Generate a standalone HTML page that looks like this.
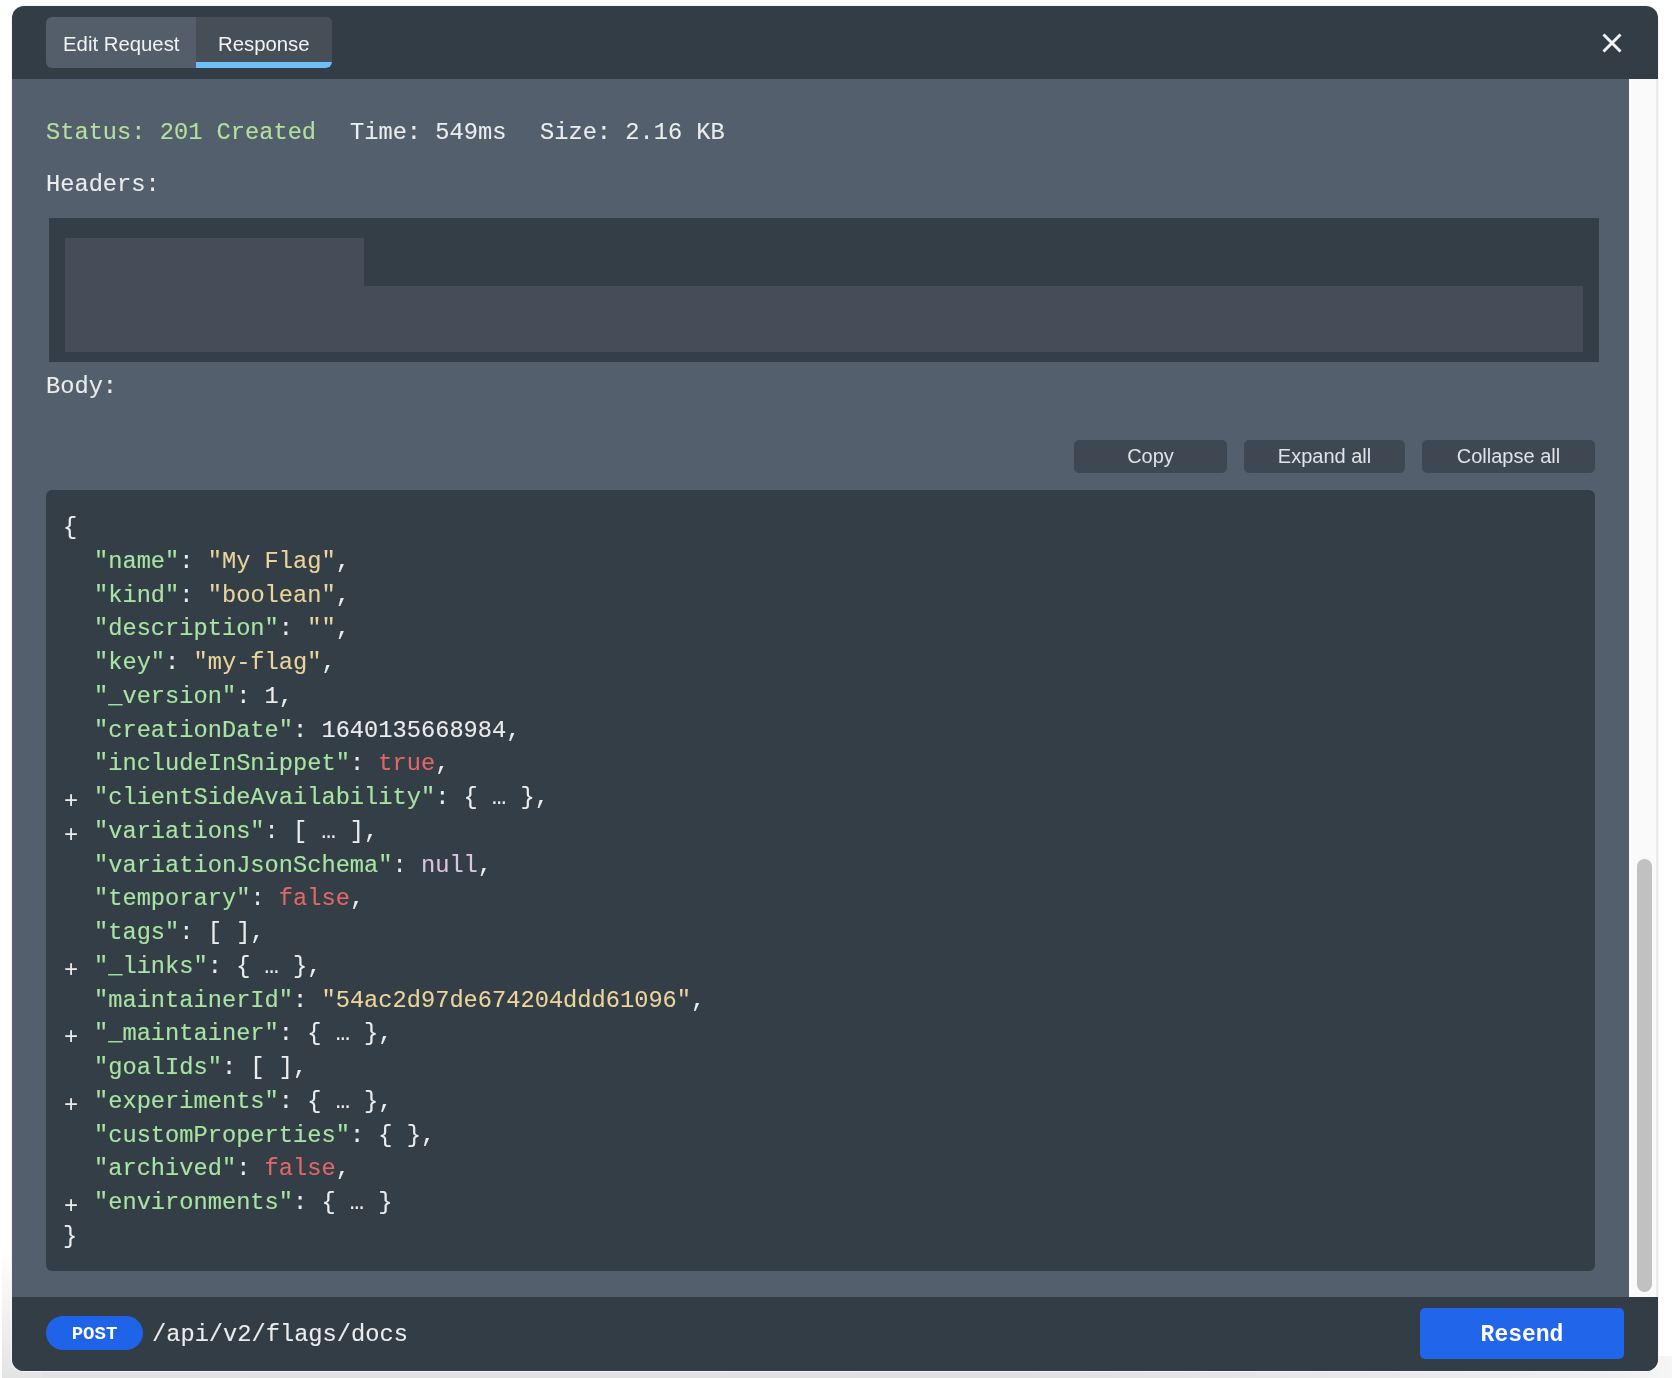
<!DOCTYPE html>
<html><head><meta charset="utf-8">
<style>
*{margin:0;padding:0;box-sizing:border-box}
html,body{width:1672px;height:1378px;overflow:hidden;background:#fff}
body{position:relative;font-family:"Liberation Sans",sans-serif}
.m,.tabt,.btn,#post,#resend{will-change:transform}
.a{position:absolute}
#dlg{left:12px;top:6px;width:1646px;height:1365px;border-radius:12px;background:#333d46;box-shadow:0 0 0 1px #f6f6f6}
#tabs{left:46px;top:17px;width:286px;height:51px;border-radius:6px;overflow:hidden;background:#545e6a}
#tab2{left:150px;top:0;width:136px;height:51px;background:#464f58}
#uline{left:150px;top:45px;width:136px;height:6px;background:#6ebff7;border-bottom-right-radius:6px}
.tabt{top:0;font-size:20.35px;color:#f2f2f2;line-height:54px;white-space:nowrap}
#body{left:12px;top:79px;width:1617px;height:1218px;background:#545f6d}
#track{left:1629px;top:79px;width:29px;height:1218px;background:#fafafa;border-right:2px solid #ececec}
#thumb{left:1637px;top:859px;width:15px;height:433px;border-radius:8px;background:#c1c1c1}
#foot{left:12px;top:1297px;width:1646px;height:74px;background:#333d46;border-radius:0 0 12px 12px}
.m{position:absolute;white-space:pre;-webkit-text-stroke:0.1px currentColor;font-family:"Liberation Mono",monospace;font-size:23.7px;line-height:30px;color:#ececec}
#hbox{left:49px;top:218px;width:1550px;height:144px;background:#343e47}
#hin1{left:65px;top:238px;width:299px;height:48px;background:#454e58}
#hin2{left:65px;top:286px;width:1518px;height:66px;background:#454e58}
.btn{top:440px;height:33px;border-radius:5px;background:#3f4852;color:#dfe2e6;font-size:20px;line-height:33px;text-align:center}
#code{left:46px;top:490px;width:1549px;height:781px;border-radius:6px;background:#343e47}
.code{line-height:33.75px}
.k{color:#a8e4a2}.s{color:#ecd59c}.r{color:#e26868}.n{color:#dcc3e4}
#post{left:46px;top:1316px;width:97px;height:34px;border-radius:17px;background:#1f63e8;color:#fff;font-family:"Liberation Mono",monospace;font-weight:bold;font-size:19px;line-height:36.6px;text-align:center}
#resend{left:1420px;top:1308px;width:204px;height:51px;border-radius:5px;background:#2165ea;color:#fff;font-family:"Liberation Mono",monospace;font-weight:bold;font-size:23px;line-height:54.5px;text-align:center}
</style></head><body>
<div class="a" style="left:2px;top:1250px;width:40px;height:128px;background:linear-gradient(to bottom,rgba(228,228,228,0),#e4e4e4)"></div>
<div class="a" style="left:42px;top:1356px;width:1630px;height:22px;background:linear-gradient(to right,#e2e2e2,#e0e0e0 60%,#efefef 97%,#f6f6f6)"></div>
<div class="a" id="dlg"></div>
<div class="a" id="tabs">
  <div class="a" id="tab2"></div>
  <div class="a" id="uline"></div>
  <div class="a tabt" style="left:16.8px">Edit Request</div>
  <div class="a tabt" style="left:172.4px">Response</div>
</div>
<svg class="a" style="left:1602px;top:32.7px" width="20" height="20" viewBox="0 0 20 20"><path d="M1.5 1.5L18.5 18.5M18.5 1.5L1.5 18.5" stroke="#f4f4f4" stroke-width="3" fill="none"/></svg>
<div class="a" id="body"></div>
<div class="a" id="track"></div>
<div class="a" id="thumb"></div>
<div class="a" id="foot"></div>

<div class="m" style="left:46px;top:117.6px"><span style="color:#b3e09a">Status: 201 Created</span></div>
<div class="m" style="left:350px;top:117.6px">Time: 549ms</div>
<div class="m" style="left:540px;top:117.6px">Size: 2.16 KB</div>
<div class="m" style="left:46px;top:169.5px">Headers:</div>
<div class="a" id="hbox"></div>
<div class="a" id="hin1"></div>
<div class="a" id="hin2"></div>
<div class="m" style="left:46px;top:372px">Body:</div>
<div class="a btn" style="left:1074px;width:153px">Copy</div>
<div class="a btn" style="left:1244px;width:161px">Expand all</div>
<div class="a btn" style="left:1422px;width:173px">Collapse all</div>
<div class="a" id="code"></div>
<div class="m code" style="left:63px;top:511px">{




















}</div>
<div class="m code" style="left:63.5px;top:514.5px">







+
+



+

+

+


+
</div>
<div class="m code" style="left:94.4px;top:511px">
<span class="k">"name"</span>: <span class="s">"My Flag"</span>,
<span class="k">"kind"</span>: <span class="s">"boolean"</span>,
<span class="k">"description"</span>: <span class="s">""</span>,
<span class="k">"key"</span>: <span class="s">"my-flag"</span>,
<span class="k">"_version"</span>: 1,
<span class="k">"creationDate"</span>: 1640135668984,
<span class="k">"includeInSnippet"</span>: <span class="r">true</span>,
<span class="k">"clientSideAvailability"</span>: { … },
<span class="k">"variations"</span>: [ … ],
<span class="k">"variationJsonSchema"</span>: <span class="n">null</span>,
<span class="k">"temporary"</span>: <span class="r">false</span>,
<span class="k">"tags"</span>: [ ],
<span class="k">"_links"</span>: { … },
<span class="k">"maintainerId"</span>: <span class="s">"54ac2d97de674204ddd61096"</span>,
<span class="k">"_maintainer"</span>: { … },
<span class="k">"goalIds"</span>: [ ],
<span class="k">"experiments"</span>: { … },
<span class="k">"customProperties"</span>: { },
<span class="k">"archived"</span>: <span class="r">false</span>,
<span class="k">"environments"</span>: { … }
</div>

<div class="a" id="post">POST</div>
<div class="m" style="left:152px;top:1319.5px">/api/v2/flags/docs</div>
<div class="a" id="resend">Resend</div>
</body></html>
